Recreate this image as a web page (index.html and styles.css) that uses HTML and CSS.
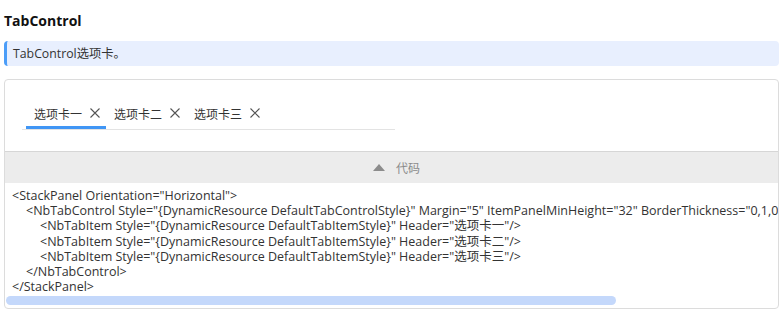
FILE: index.html
```html
<!DOCTYPE html>
<html>
<head>
<meta charset="utf-8">
<link rel="stylesheet" href="styles.css">
</head>
<body>
<div class="page">
  <h1 class="title">TabControl</h1>
  <div class="note">TabControl选项卡。</div>
  <div class="card">
    <div class="demo">
      <div class="tabs">
        <div class="tab active"><span class="tab-text">选项卡一</span><svg class="close" viewBox="0 0 10 10" width="10" height="10"><path d="M0.5 0.5 L9.5 9.5 M9.5 0.5 L0.5 9.5" stroke="#555" stroke-width="1.1" fill="none"/></svg></div>
        <div class="tab"><span class="tab-text">选项卡二</span><svg class="close" viewBox="0 0 10 10" width="10" height="10"><path d="M0.5 0.5 L9.5 9.5 M9.5 0.5 L0.5 9.5" stroke="#555" stroke-width="1.1" fill="none"/></svg></div>
        <div class="tab"><span class="tab-text">选项卡三</span><svg class="close" viewBox="0 0 10 10" width="10" height="10"><path d="M0.5 0.5 L9.5 9.5 M9.5 0.5 L0.5 9.5" stroke="#555" stroke-width="1.1" fill="none"/></svg></div>
      </div>
    </div>
    <div class="code-bar"><svg class="tri" viewBox="0 0 12 7" width="12" height="7"><path d="M0 7 L6 0 L12 7 Z" fill="#8c8c8c"/></svg><span>代码</span></div>
    <div class="code">
      <div class="line">&lt;StackPanel Orientation="Horizontal"&gt;</div>
      <div class="line i1">&lt;NbTabControl Style="{DynamicResource DefaultTabControlStyle}" Margin="5" ItemPanelMinHeight="32" BorderThickness="0,1,0,0" BorderBrush="#DDDDDD"&gt;</div>
      <div class="line i2">&lt;NbTabItem Style="{DynamicResource DefaultTabItemStyle}" Header="选项卡一"/&gt;</div>
      <div class="line i2">&lt;NbTabItem Style="{DynamicResource DefaultTabItemStyle}" Header="选项卡二"/&gt;</div>
      <div class="line i2">&lt;NbTabItem Style="{DynamicResource DefaultTabItemStyle}" Header="选项卡三"/&gt;</div>
      <div class="line i1">&lt;/NbTabControl&gt;</div>
      <div class="line">&lt;/StackPanel&gt;</div>
    </div>
    <div class="scroll"><div class="thumb"></div></div>
  </div>
</div>
</body>
</html>
```
FILE: styles.css
```css
* { box-sizing: border-box; }
body {
  margin: 0;
  background: #fff;
  font-family: "Open Sans", "Noto Sans CJK SC", sans-serif;
  color: #333;
}
.page {
  padding: 11px 1px 0 4px;
}
.title {
  margin: 0;
  font-size: 14px;
  font-weight: 700;
  color: #111;
  line-height: 20px;
  height: 20px;
}
.note {
  margin-top: 10px;
  height: 25px;
  line-height: 25px;
  background: #e8effe;
  border-left: 3px solid #4b9df8;
  border-radius: 4px;
  padding-left: 6px;
  font-size: 12.3px;
  color: #333;
}
.card {
  margin-top: 13px;
  border: 1px solid #dcdcdc;
  border-radius: 4px;
  overflow: hidden;
  height: 230px;
}
.demo {
  height: 71px;
  padding: 20px 0 0 17px;
}
.tabs {
  display: flex;
  width: 373px;
  height: 30px;
  border-bottom: 1px solid #e3e3e3;
  padding-left: 4px;
}
.tab {
  width: 80px;
  height: 29px;
  display: flex;
  align-items: center;
  padding-left: 8px;
  padding-bottom: 3px;
  font-size: 12px;
  color: #333;
}
.tab-text {
  font-family: "Noto Sans CJK SC", sans-serif;
  width: 56px;
}
.tab.active {
  border-bottom: 3px solid #4096f5;
  padding-bottom: 0;
}
.close { display: block; }
.code-bar {
  height: 32px;
  background: #ececec;
  border-top: 1px solid #d6d6d6;
  display: flex;
  align-items: center;
  justify-content: center;
  gap: 11px;
  font-size: 12px;
  color: #8a8a8a;
  font-family: "Noto Sans CJK SC", sans-serif;
  padding-left: 10px;
}
.tri { display: block; }
.code {
  padding: 5px 0 0 7px;
  font-size: 12.5px;
  line-height: 15.2px;
  color: #333;
  white-space: nowrap;
  height: 113px;
}
.line.i1 { padding-left: 14px; }
.line.i2 { padding-left: 28px; }
.scroll {
  padding: 0 0 0 1px;
}
.thumb {
  width: 610px;
  height: 9px;
  background: #c4d8fb;
  border-radius: 5px;
}
```
